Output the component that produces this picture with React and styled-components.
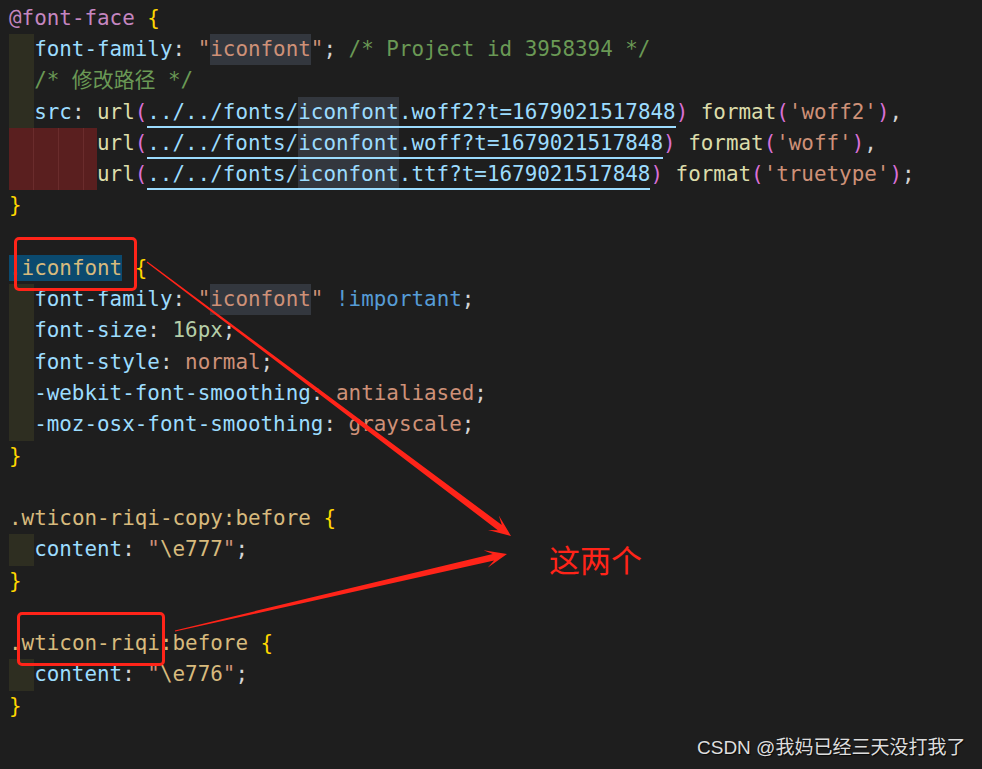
import React from 'react';
import styled, { createGlobalStyle } from 'styled-components';

const LH = 31.27;
const RED = '#ff2419';

const Global = createGlobalStyle`
	html, body {
		margin: 0;
		padding: 0;
		background: #1e1e1e;
	}
`;

const Page = styled.div`
	position: relative;
	width: 982px;
	height: 769px;
	overflow: hidden;
	background: #1e1e1e;
`;

const Editor = styled.div`
	padding: 2.8px 0 0 9px;
	font-family: 'DejaVu Sans Mono', 'Noto Sans CJK SC', monospace;
	font-size: 20.9px;
	color: #d4d4d4;
`;

const Line = styled.div`
	display: flex;
	height: ${LH}px;
	line-height: ${LH}px;
	white-space: pre;
`;

const Guide = styled.span`
	display: inline-block;
	width: ${(p) => p.$cols}ch;
	height: 100%;
	background: ${(p) => (p.$err ? '#5a1f1f' : '#2e2e21')};
	box-shadow: ${(p) => (p.$split ? 'inset -1px 0 0 #6a2c2c' : 'none')};
`;

const Code = styled.span`
	display: inline-block;
	height: 100%;
`;

// token colours (dark+)
const At = styled.span` color: #c586c0; `;
const Brace = styled.span` color: #ffd700; `;
const Paren = styled.span` color: #da70d6; `;
const Prop = styled.span` color: #9cdcfe; `;
const Str = styled.span` color: #ce9178; `;
const Esc = styled.span` color: #d7ba7d; `;
const Comment = styled.span` color: #6a9955; `;
const Fn = styled.span` color: #dcdcaa; `;
const Num = styled.span` color: #b5cea8; `;
const Kw = styled.span` color: #569cd6; `;
const Sel = styled.span` color: #d7ba7d; `;

const Path = styled.span`
	display: inline-block;
	color: #9cdcfe;
	box-shadow: inset 0 -2px 0 #9cdcfe;
`;

const Mark = styled.span`
	display: inline-block;
	background: #33373e;
	box-shadow: ${(p) => (p.$under ? 'inset 0 -2px 0 #9cdcfe' : 'none')};
`;

const Selection = styled.span`
	display: inline-block;
	height: 26px;
	line-height: 26px;
	margin-top: 0.5px;
	background: #0b4a6f;
`;

const Box = styled.div`
	position: absolute;
	left: ${(p) => p.$x}px;
	top: ${(p) => p.$y}px;
	width: ${(p) => p.$w}px;
	height: ${(p) => p.$h}px;
	box-sizing: border-box;
	border: 3.5px solid ${RED};
	border-radius: 5px;
`;

const Arrows = styled.svg`
	position: absolute;
	left: 0;
	top: 0;
	pointer-events: none;
`;

const Note = styled.div`
	position: absolute;
	left: 549px;
	top: 543px;
	font-family: 'Noto Sans CJK SC', sans-serif;
	font-size: 31px;
	line-height: 31px;
	color: ${RED};
`;

const Watermark = styled.div`
	position: absolute;
	left: 697px;
	top: 737px;
	font-family: 'Liberation Sans', 'Noto Sans CJK SC', sans-serif;
	font-size: 19px;
	line-height: 22px;
	color: #dedede;
	text-shadow: 1px 1px 1px rgba(0, 0, 0, 0.7);
	white-space: nowrap;
`;

const Indent = () => <Guide $cols={2} />;

const ErrIndent = () => (
	<>
		<Guide $cols={2} $err $split />
		<Guide $cols={2} $err $split />
		<Guide $cols={2} $err $split />
		<Guide $cols={1} $err />
	</>
);

const Url = ({ ext }) => (
	<>
		<Fn>url</Fn>
		<Paren>(</Paren>
		<Path>
			../../fonts/<Mark $under>iconfont</Mark>
			{ext}?t=1679021517848
		</Path>
		<Paren>)</Paren>
	</>
);

const Format = ({ kind, end }) => (
	<>
		{' '}
		<Fn>format</Fn>
		<Paren>(</Paren>
		<Str>'{kind}'</Str>
		<Paren>)</Paren>
		{end}
	</>
);

function arrow(x1, y1, x2, y2) {
	const dx = x2 - x1;
	const dy = y2 - y1;
	const len = Math.hypot(dx, dy);
	const ux = dx / len;
	const uy = dy / len;
	const nx = -uy;
	const ny = ux;
	const p = (a, b) => `${x2 - ux * a + nx * b},${y2 - uy * a + ny * b}`;
	return [
		`${x1 + nx * 0.6},${y1 + ny * 0.6}`,
		p(14, 3.3),
		p(22, 9),
		`${x2},${y2}`,
		p(22, -9),
		p(14, -3.3),
		`${x1 - nx * 0.6},${y1 - ny * 0.6}`,
	].join(' ');
}

const App = () => (
	<Page>
		<Global />
		<Editor>
			<Line>
				<Code><At>@font-face</At> <Brace>{'{'}</Brace></Code>
			</Line>
			<Line>
				<Indent />
				<Code>
					<Prop>font-family</Prop>: <Str>"<Mark>iconfont</Mark>"</Str>;{' '}
					<Comment>/* Project id 3958394 */</Comment>
				</Code>
			</Line>
			<Line>
				<Indent />
				<Code><Comment>/* 修改路径 */</Comment></Code>
			</Line>
			<Line>
				<Indent />
				<Code>
					<Prop>src</Prop>: <Url ext=".woff2" />
					<Format kind="woff2" end="," />
				</Code>
			</Line>
			<Line>
				<ErrIndent />
				<Code>
					<Url ext=".woff" />
					<Format kind="woff" end="," />
				</Code>
			</Line>
			<Line>
				<ErrIndent />
				<Code>
					<Url ext=".ttf" />
					<Format kind="truetype" end=";" />
				</Code>
			</Line>
			<Line>
				<Code><Brace>{'}'}</Brace></Code>
			</Line>
			<Line />
			<Line>
				<Code>
					<Selection><Sel>.iconfont</Sel></Selection> <Brace>{'{'}</Brace>
				</Code>
			</Line>
			<Line>
				<Indent />
				<Code>
					<Prop>font-family</Prop>: <Str>"<Mark>iconfont</Mark>"</Str>{' '}
					<Kw>!important</Kw>;
				</Code>
			</Line>
			<Line>
				<Indent />
				<Code><Prop>font-size</Prop>: <Num>16px</Num>;</Code>
			</Line>
			<Line>
				<Indent />
				<Code><Prop>font-style</Prop>: <Str>normal</Str>;</Code>
			</Line>
			<Line>
				<Indent />
				<Code><Prop>-webkit-font-smoothing</Prop>: <Str>antialiased</Str>;</Code>
			</Line>
			<Line>
				<Indent />
				<Code><Prop>-moz-osx-font-smoothing</Prop>: <Str>grayscale</Str>;</Code>
			</Line>
			<Line>
				<Code><Brace>{'}'}</Brace></Code>
			</Line>
			<Line />
			<Line>
				<Code><Sel>.wticon-riqi-copy:before</Sel> <Brace>{'{'}</Brace></Code>
			</Line>
			<Line>
				<Indent />
				<Code><Prop>content</Prop>: <Str>"<Esc>\e777</Esc>"</Str>;</Code>
			</Line>
			<Line>
				<Code><Brace>{'}'}</Brace></Code>
			</Line>
			<Line />
			<Line>
				<Code><Sel>.wticon-riqi:before</Sel> <Brace>{'{'}</Brace></Code>
			</Line>
			<Line>
				<Indent />
				<Code><Prop>content</Prop>: <Str>"<Esc>\e776</Esc>"</Str>;</Code>
			</Line>
			<Line>
				<Code><Brace>{'}'}</Brace></Code>
			</Line>
		</Editor>

		<Box $x={14} $y={237} $w={123} $h={54} />
		<Box $x={17} $y={612} $w={148} $h={54} />

		<Arrows width="982" height="769" viewBox="0 0 982 769">
			<polygon points={arrow(147, 262, 511, 536)} fill={RED} />
			<polygon points={arrow(175, 631, 507, 554)} fill={RED} />
		</Arrows>

		<Note>这两个</Note>
		<Watermark>CSDN @我妈已经三天没打我了</Watermark>
	</Page>
);

export default App;
